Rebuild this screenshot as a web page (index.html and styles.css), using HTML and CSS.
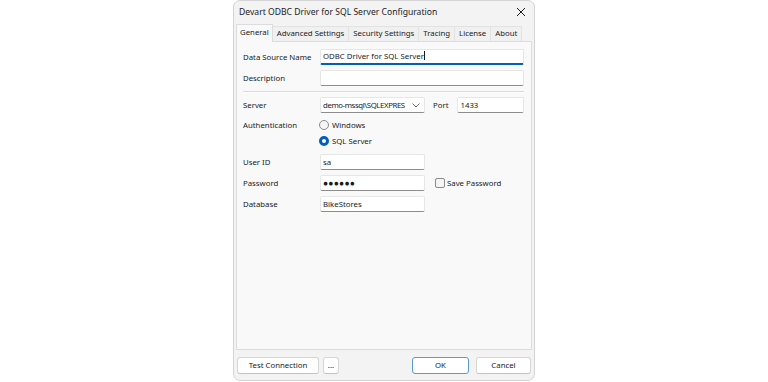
FILE: index.html
```html
<!DOCTYPE html>
<html lang="en">
<head>
    <meta charset="UTF-8">
    <meta name="viewport" content="width=device-width, initial-scale=1.0">
    <link rel="stylesheet" href="styles.css">
    <title>Devart ODBC Driver for SQL Server Configuration</title>
</head>
<body>
    <div id="window">
        <div id="titlebar">
            <span id="title">Devart ODBC Driver for SQL Server Configuration</span>
            <svg id="closeBtn" width="10" height="10" viewBox="0 0 10 10">
                <path d="M1 1 L9 9 M9 1 L1 9" stroke="#1a1a1a" stroke-width="1" fill="none"/>
            </svg>
        </div>

        <div id="tabs">
            <div class="tab selected">General</div>
            <div class="tab">Advanced Settings</div>
            <div class="tab">Security Settings</div>
            <div class="tab">Tracing</div>
            <div class="tab">License</div>
            <div class="tab">About</div>
        </div>

        <div id="panel">
            <div class="row">
                <label class="lbl">Data Source Name</label>
                <div class="field wide focused">ODBC Driver for SQL Server<span class="caret"></span></div>
            </div>
            <div class="row">
                <label class="lbl">Description</label>
                <div class="field wide"></div>
            </div>

            <div class="separator"></div>

            <div class="row">
                <label class="lbl">Server</label>
                <div class="field combo">
                    <span class="comboText">demo-mssql\SQLEXPRES</span>
                    <svg width="8" height="5" viewBox="0 0 8 5">
                        <path d="M0.5 0.5 L4 4 L7.5 0.5" stroke="#606060" stroke-width="0.9" fill="none"/>
                    </svg>
                </div>
                <label class="lbl portLbl">Port</label>
                <div class="field port">1433</div>
            </div>

            <div class="authRow">
                <label class="lbl">Authentication</label>
                <div class="radios">
                    <div class="radioItem"><span class="radio"></span>Windows</div>
                    <div class="radioItem"><span class="radio checked"></span>SQL Server</div>
                </div>
            </div>

            <div class="row">
                <label class="lbl">User ID</label>
                <div class="field mid">sa</div>
            </div>
            <div class="row">
                <label class="lbl">Password</label>
                <div class="field mid dots">&#9679;&#9679;&#9679;&#9679;&#9679;&#9679;</div>
                <div class="checkItem"><span class="checkbox"></span>Save Password</div>
            </div>
            <div class="row">
                <label class="lbl">Database</label>
                <div class="field mid">BikeStores</div>
            </div>
        </div>

        <div id="footer">
            <button class="btn testBtn">Test Connection</button>
            <button class="btn moreBtn">...</button>
            <div class="spacer"></div>
            <button class="btn okBtn">OK</button>
            <button class="btn cancelBtn">Cancel</button>
        </div>
    </div>
</body>
</html>
```

FILE: styles.css
```css
body{
    margin: 0;
    padding: 0;
    background-color: white;
    font-family: "Noto Sans", "Liberation Sans", sans-serif;
    font-size: 7.8px;
    color: #1a1a1a;
}

#window{
    width: 302px;
    height: 381px;
    margin: 0 auto;
    box-sizing: border-box;
    border: 1px solid #d4d4d4;
    border-radius: 7px;
    background-color: #f3f3f3;
    display: flex;
    flex-direction: column;
    overflow: hidden;
}

#titlebar{
    height: 22px;
    display: flex;
    align-items: center;
    padding: 0 8px 0 5px;
    flex-shrink: 0;
}

#title{
    flex: 1;
    font-size: 8.6px;
}

#closeBtn{
    display: block;
}

#tabs{
    display: flex;
    align-items: flex-end;
    padding-left: 2px;
    height: 18px;
    flex-shrink: 0;
}

.tab{
    height: 15px;
    line-height: 12px;
    padding: 0 4px;
    box-sizing: border-box;
    border: 1px solid #e2e2e2;
    border-bottom: none;
    margin-right: -1px;
    background-color: #f0f0f0;
}

.tab.selected{
    height: 18px;
    line-height: 15px;
    padding: 0 3px;
    background-color: #f9f9f9;
    border-color: #dcdcdc;
    position: relative;
    margin-bottom: -1px;
    z-index: 1;
}

#panel{
    flex: 1;
    margin: 0 2px;
    border: 1px solid #dcdcdc;
    background-color: #f9f9f9;
    padding: 7px 7px 0 6px;
    display: flex;
    flex-direction: column;
    gap: 5px;
}

.row{
    display: flex;
    align-items: center;
    height: 16px;
}

.lbl{
    width: 77px;
    flex-shrink: 0;
}

.field{
    height: 16px;
    box-sizing: border-box;
    background-color: white;
    border: 1px solid #e6e6e6;
    border-bottom-color: #8d8d8d;
    border-radius: 2px;
    padding: 0 2px;
    line-height: 14px;
    white-space: nowrap;
    overflow: hidden;
}

.wide{
    flex: 1;
}

.focused{
    border-bottom: 2px solid #005fb8;
    line-height: 13px;
}

.caret{
    display: inline-block;
    width: 1px;
    height: 9px;
    background-color: #1a1a1a;
    vertical-align: -1px;
}

.separator{
    height: 0;
    border-top: 1px solid #d9d9d9;
    border-bottom: 1px solid #ffffff;
    margin: 0 0 -1px 0;
}

.combo{
    width: 105px;
    display: flex;
    align-items: center;
    justify-content: space-between;
    padding-right: 4px;
}

.comboText{
    letter-spacing: -0.4px;
}

.portLbl{
    width: auto;
    margin-left: 8px;
    margin-right: 9px;
}

.port{
    flex: 1;
}

.mid{
    width: 105px;
}

.dots{
    font-size: 8.4px;
    letter-spacing: 0.3px;
}

.authRow{
    display: flex;
    margin-top: 1px;
    margin-bottom: 2px;
}

.authRow .lbl{
    padding-top: 1px;
}

.radios{
    display: flex;
    flex-direction: column;
    gap: 4px;
    margin-left: -1px;
}

.radioItem{
    display: flex;
    align-items: center;
    height: 12px;
}

.radio{
    width: 10px;
    height: 10px;
    box-sizing: border-box;
    border: 1px solid #8a8a8a;
    border-radius: 50%;
    background-color: #f5f5f5;
    margin-right: 3px;
}

.radio.checked{
    border: 3px solid #005fb8;
    background-color: white;
}

.checkItem{
    display: flex;
    align-items: center;
    margin-left: 10px;
}

.checkbox{
    width: 10px;
    height: 10px;
    box-sizing: border-box;
    border: 1px solid #8a8a8a;
    border-radius: 2px;
    background-color: #f5f5f5;
    margin-right: 2px;
}

#footer{
    height: 30px;
    flex-shrink: 0;
    display: flex;
    align-items: center;
    padding: 0 3px 0 3px;
    gap: 4px;
}

.spacer{
    flex: 1;
}

.btn{
    height: 17px;
    font-family: "Noto Sans", "Liberation Sans", sans-serif;
    font-size: 7.8px;
    color: #1a1a1a;
    background-color: white;
    border: 1px solid #d6d6d6;
    border-bottom-color: #c2c2c2;
    border-radius: 3px;
    padding: 0;
}

.testBtn{
    width: 82px;
}

.moreBtn{
    width: 16px;
}

.okBtn{
    width: 57px;
    border: 1px solid #5b9bd5;
    margin-right: 3px;
}

.cancelBtn{
    width: 55px;
}
```
